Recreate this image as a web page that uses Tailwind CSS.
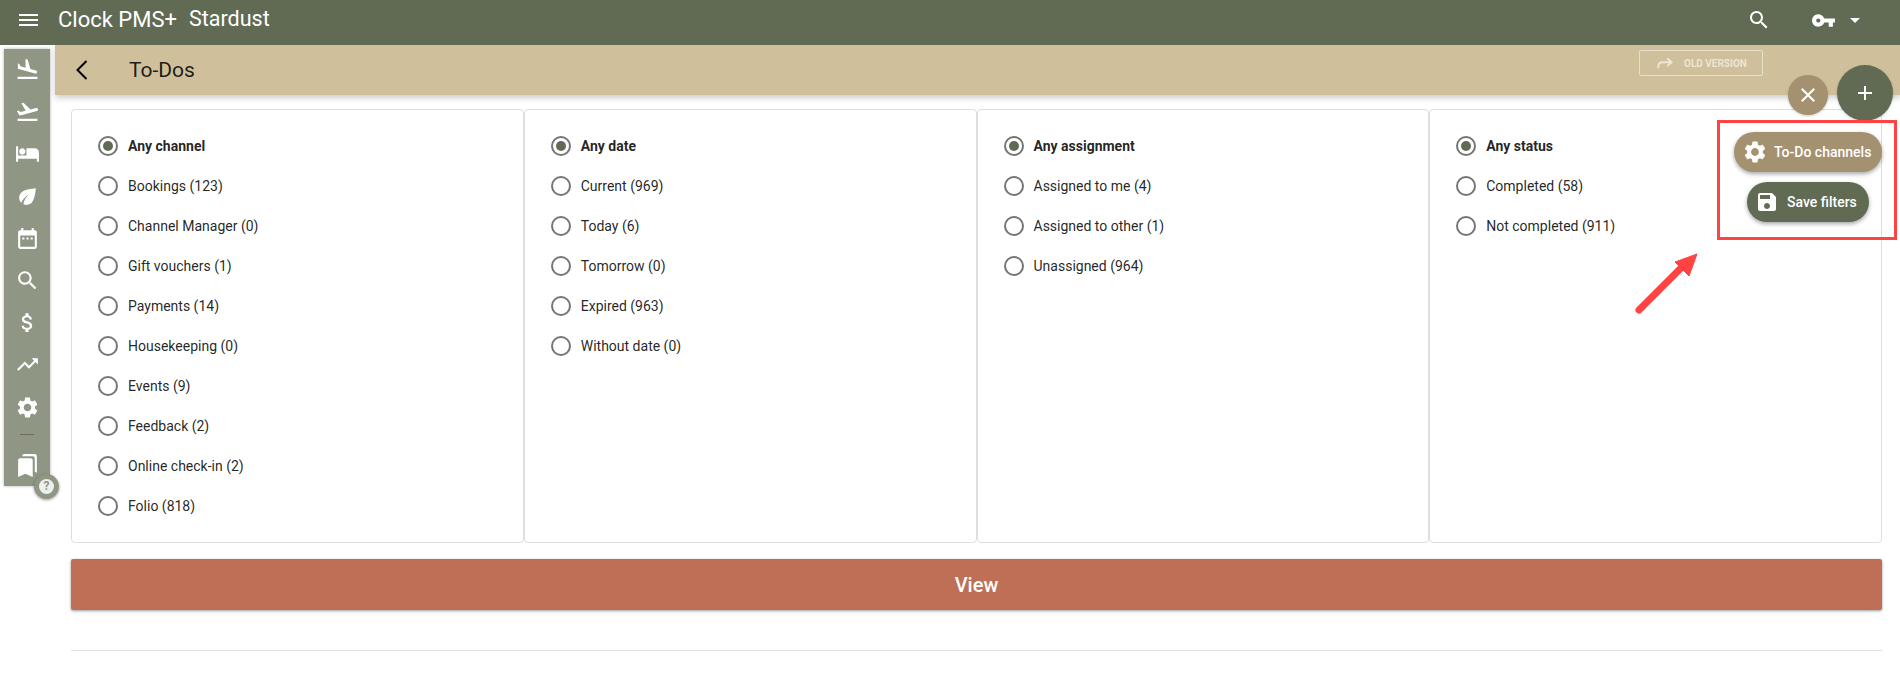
<!DOCTYPE html>
<html lang="en">
<head>
    <meta charset="UTF-8">
    <title>To-Dos | Clock PMS+</title>
    <script src="https://cdn.jsdelivr.net/npm/@tailwindcss/browser@4"></script>
</head>
<body class="relative w-[1900px] h-[689px] overflow-hidden bg-white font-['Roboto',sans-serif] text-[14px] text-black/87">

    <header class="relative z-20 h-[45px] pb-[5px] bg-[#616b54] flex items-center text-white">
        <button class="ml-[19px] w-[19px] flex flex-col gap-[3px]">
            <span class="block h-[2px] bg-white"></span>
            <span class="block h-[2px] bg-white"></span>
            <span class="block h-[2px] bg-white"></span>
        </button>
        <span class="ml-[20px] -mt-[1px] text-[22px]">Clock PMS+</span>
        <span class="ml-[12px] -mt-[1px] text-[21.5px]">Stardust</span>
        <svg class="ml-auto w-[24px] h-[24px]" viewBox="0 0 24 24" fill="white"><path d="M15.5 14h-.79l-.28-.27C15.41 12.59 16 11.11 16 9.5 16 5.91 13.09 3 9.5 3S3 5.91 3 9.5 5.91 16 9.5 16c1.61 0 3.09-.59 4.23-1.57l.27.28v.79l5 4.99L20.49 19l-4.99-5zm-6 0C7.01 14 5 11.99 5 9.5S7.01 5 9.5 5 14 7.01 14 9.5 11.99 14 9.5 14z"/></svg>
        <svg class="ml-[40px] w-[25px] h-[25px]" viewBox="0 0 24 24" fill="white"><path d="M12.65 10C11.83 7.67 9.61 6 7 6c-3.31 0-6 2.69-6 6s2.69 6 6 6c2.61 0 4.83-1.67 5.65-4H17v4h4v-4h2v-4H12.65zM7 14c-1.1 0-2-.9-2-2s.9-2 2-2 2 .9 2 2-.9 2-2 2z"/></svg>
        <span class="ml-[14px] mr-[40px] w-0 h-0 border-x-[5px] border-x-transparent border-t-[5px] border-t-white"></span>
    </header>

    <div class="flex">
        <aside class="relative z-10 ml-[4px] mt-[4px] w-[46px] h-[437px] bg-[#8f9784] flex flex-col items-center pt-[8px] text-white shadow-[0_0_3px_rgba(0,0,0,0.3)]">
            <svg class="w-[25px] h-[25px] mb-[17.2px]" viewBox="0 0 24 24" fill="white"><path d="M2.5 19h19v2h-19zm7.18-5.73l4.35 1.16 5.31 1.42c.8.21 1.62-.26 1.84-1.06.21-.8-.26-1.62-1.06-1.84l-5.31-1.42-2.76-9.02L10.12 2v8.28L5.15 8.95l-.93-2.32-1.45-.39v5.17l1.6.43 5.31 1.43z"/></svg>
            <svg class="w-[25px] h-[25px] mb-[17.2px]" viewBox="0 0 24 24" fill="white"><path d="M2.5 19h19v2h-19zm19.57-9.36c-.21-.8-1.04-1.28-1.84-1.06L14.92 10l-6.9-6.43-1.93.51 4.14 7.17-4.97 1.33-1.97-1.54-1.45.39 1.82 3.16.77 1.33 1.6-.43 5.31-1.42 4.35-1.16L21 11.49c.81-.23 1.28-1.05 1.07-1.85z"/></svg>
            <svg class="w-[25px] h-[25px] mb-[17.2px]" viewBox="0 0 24 24" fill="white"><path d="M7 13c1.66 0 3-1.34 3-3S8.66 7 7 7s-3 1.34-3 3 1.34 3 3 3zm12-6h-8v7H3V5H1v15h2v-3h18v3h2v-9c0-2.21-1.79-4-4-4z"/></svg>
            <svg class="w-[25px] h-[25px] mb-[17.2px]" viewBox="0 0 24 24" fill="white"><path d="M6.05 8.05c-2.73 2.73-2.73 7.15-.02 9.88 1.47-3.4 4.09-6.24 7.36-7.93-2.77 2.34-4.71 5.61-5.39 9.32 2.6 1.23 5.8.78 7.95-1.37C19.43 14.47 20 4 20 4S9.53 4.57 6.05 8.05z"/></svg>
            <svg class="w-[25px] h-[25px] mb-[17.2px]" viewBox="0 0 24 24" fill="white"><path d="M9 11H7v2h2v-2zm4 0h-2v2h2v-2zm4 0h-2v2h2v-2zm2-7h-1V2h-2v2H8V2H6v2H5c-1.11 0-1.99.9-1.99 2L3 20c0 1.1.89 2 2 2h14c1.1 0 2-.9 2-2V6c0-1.1-.9-2-2-2zm0 16H5V9h14v11z"/></svg>
            <svg class="w-[25px] h-[25px] mb-[17.2px]" viewBox="0 0 24 24" fill="white"><path d="M15.5 14h-.79l-.28-.27C15.41 12.59 16 11.11 16 9.5 16 5.91 13.09 3 9.5 3S3 5.91 3 9.5 5.91 16 9.5 16c1.61 0 3.09-.59 4.23-1.57l.27.28v.79l5 4.99L20.49 19l-4.99-5zm-6 0C7.01 14 5 11.99 5 9.5S7.01 5 9.5 5 14 7.01 14 9.5 11.99 14 9.5 14z"/></svg>
            <svg class="w-[25px] h-[25px] mb-[17.2px]" viewBox="0 0 24 24" fill="white"><path d="M11.8 10.9c-2.27-.59-3-1.2-3-2.15 0-1.09 1.01-1.85 2.7-1.85 1.78 0 2.44.85 2.5 2.1h2.21c-.07-1.72-1.12-3.3-3.21-3.81V3h-3v2.16c-1.94.42-3.5 1.68-3.5 3.61 0 2.31 1.91 3.46 4.7 4.13 2.5.6 3 1.48 3 2.41 0 .69-.49 1.79-2.7 1.79-2.06 0-2.87-.92-2.98-2.1h-2.2c.12 2.19 1.76 3.42 3.68 3.83V21h3v-2.15c1.95-.37 3.5-1.5 3.5-3.55 0-2.84-2.43-3.81-4.7-4.4z"/></svg>
            <svg class="w-[25px] h-[25px] mb-[17.2px]" viewBox="0 0 24 24" fill="white"><path d="M16 6l2.29 2.29-4.88 4.88-4-4L2 16.59 3.41 18l6-6 4 4 6.3-6.29L22 12V6z"/></svg>
            <svg class="w-[25px] h-[25px]" viewBox="0 0 24 24" fill="white"><path d="M19.14 12.94c.04-.3.06-.61.06-.94 0-.32-.02-.64-.07-.94l2.03-1.58c.18-.14.23-.41.12-.61l-1.92-3.32c-.12-.22-.37-.29-.59-.22l-2.39.96c-.5-.38-1.03-.7-1.62-.94l-.36-2.54c-.04-.24-.24-.41-.48-.41h-3.84c-.24 0-.43.17-.47.41l-.36 2.54c-.59.24-1.13.57-1.62.94l-2.39-.96c-.22-.08-.47 0-.59.22L2.74 8.87c-.12.21-.08.47.12.61l2.03 1.58c-.05.3-.09.63-.09.94s.02.64.07.94l-2.03 1.58c-.18.14-.23.41-.12.61l1.92 3.32c.12.22.37.29.59.22l2.39-.96c.5.38 1.03.7 1.62.94l.36 2.54c.05.24.24.41.48.41h3.84c.24 0 .44-.17.47-.41l.36-2.54c.59-.24 1.13-.56 1.62-.94l2.39.96c.22.08.47 0 .59-.22l1.92-3.32c.12-.22.07-.47-.12-.61l-2.01-1.58zM12 15.6c-1.98 0-3.6-1.62-3.6-3.6s1.62-3.6 3.6-3.6 3.6 1.62 3.6 3.6-1.62 3.6-3.6 3.6z"/></svg>
            <div class="w-[14px] h-px bg-[#6e6a5c] mt-[14px] mb-[18px]"></div>
            <svg class="w-[25px] h-[25px]" viewBox="0 0 24 24" fill="white"><path d="M19 18l2 1V3c0-1.1-.9-2-2-2H8.99C7.89 1 7 1.9 7 3h10c1.1 0 2 .9 2 2v13zM15 5H5c-1.1 0-2 .9-2 2v16l7-3 7 3V7c0-1.1-.9-2-2-2z"/></svg>
            <div class="absolute left-[30px] top-[425px] w-[25px] h-[25px] rounded-full bg-[#8f9784] shadow-[0_1px_3px_rgba(0,0,0,0.4)] flex items-center justify-center">
                <span class="w-[15px] h-[15px] rounded-full bg-white/85 text-[#8f9784] text-[12px] font-bold leading-[15px] text-center">?</span>
            </div>
        </aside>

        <main class="w-[1845px] ml-[5px]">
            <div class="h-[50px] bg-[#cfc09b] flex items-center shadow-[0_3px_6px_rgba(0,0,0,0.2)]">
                <svg class="ml-[16px] w-[24px] h-[24px]" viewBox="0 0 24 24" fill="none" stroke="black" stroke-width="2"><path d="M15.5 3 L6.5 12 L15.5 21"/></svg>
                <h1 class="ml-[34px] mt-[1px] text-[21px]">To-Dos</h1>
                <a class="ml-auto mr-[137px] self-start mt-[5px] w-[124px] h-[26px] border border-white/50 rounded-[2px] flex items-center text-[10px] font-bold text-white/60">
                    <svg class="ml-[16px] w-[18px] h-[18px]" viewBox="0 0 24 24" fill="none" stroke="white" stroke-opacity="0.6" stroke-width="2.5"><path d="M3 19v-2c0-4 2-6 6-6h11M15 6l6 5-6 5"/></svg>
                    <span class="ml-[10px]">OLD VERSION</span>
                </a>
            </div>

            <section class="mt-[14px] ml-[16px] w-[1811px] h-[434px] grid grid-cols-4">
                <div class="pl-[26px] pt-[16px] border border-[#dedede] rounded-[4px]">
                    <label class="flex items-center h-[40px] gap-[10px] font-bold"><span class="w-[20px] h-[20px] rounded-full border-2 border-[#757575] flex items-center justify-center"><span class="w-[10px] h-[10px] rounded-full bg-[#616b54]"></span></span><span>Any channel</span></label>
                    <label class="flex items-center h-[40px] gap-[10px]"><span class="w-[20px] h-[20px] rounded-full border-2 border-[#757575]"></span><span>Bookings (123)</span></label>
                    <label class="flex items-center h-[40px] gap-[10px]"><span class="w-[20px] h-[20px] rounded-full border-2 border-[#757575]"></span><span>Channel Manager (0)</span></label>
                    <label class="flex items-center h-[40px] gap-[10px]"><span class="w-[20px] h-[20px] rounded-full border-2 border-[#757575]"></span><span>Gift vouchers (1)</span></label>
                    <label class="flex items-center h-[40px] gap-[10px]"><span class="w-[20px] h-[20px] rounded-full border-2 border-[#757575]"></span><span>Payments (14)</span></label>
                    <label class="flex items-center h-[40px] gap-[10px]"><span class="w-[20px] h-[20px] rounded-full border-2 border-[#757575]"></span><span>Housekeeping (0)</span></label>
                    <label class="flex items-center h-[40px] gap-[10px]"><span class="w-[20px] h-[20px] rounded-full border-2 border-[#757575]"></span><span>Events (9)</span></label>
                    <label class="flex items-center h-[40px] gap-[10px]"><span class="w-[20px] h-[20px] rounded-full border-2 border-[#757575]"></span><span>Feedback (2)</span></label>
                    <label class="flex items-center h-[40px] gap-[10px]"><span class="w-[20px] h-[20px] rounded-full border-2 border-[#757575]"></span><span>Online check-in (2)</span></label>
                    <label class="flex items-center h-[40px] gap-[10px]"><span class="w-[20px] h-[20px] rounded-full border-2 border-[#757575]"></span><span>Folio (818)</span></label>
                </div>
                <div class="pl-[26px] pt-[16px] border border-[#dedede] rounded-[4px]">
                    <label class="flex items-center h-[40px] gap-[10px] font-bold"><span class="w-[20px] h-[20px] rounded-full border-2 border-[#757575] flex items-center justify-center"><span class="w-[10px] h-[10px] rounded-full bg-[#616b54]"></span></span><span>Any date</span></label>
                    <label class="flex items-center h-[40px] gap-[10px]"><span class="w-[20px] h-[20px] rounded-full border-2 border-[#757575]"></span><span>Current (969)</span></label>
                    <label class="flex items-center h-[40px] gap-[10px]"><span class="w-[20px] h-[20px] rounded-full border-2 border-[#757575]"></span><span>Today (6)</span></label>
                    <label class="flex items-center h-[40px] gap-[10px]"><span class="w-[20px] h-[20px] rounded-full border-2 border-[#757575]"></span><span>Tomorrow (0)</span></label>
                    <label class="flex items-center h-[40px] gap-[10px]"><span class="w-[20px] h-[20px] rounded-full border-2 border-[#757575]"></span><span>Expired (963)</span></label>
                    <label class="flex items-center h-[40px] gap-[10px]"><span class="w-[20px] h-[20px] rounded-full border-2 border-[#757575]"></span><span>Without date (0)</span></label>
                </div>
                <div class="pl-[26px] pt-[16px] border border-[#dedede] rounded-[4px]">
                    <label class="flex items-center h-[40px] gap-[10px] font-bold"><span class="w-[20px] h-[20px] rounded-full border-2 border-[#757575] flex items-center justify-center"><span class="w-[10px] h-[10px] rounded-full bg-[#616b54]"></span></span><span>Any assignment</span></label>
                    <label class="flex items-center h-[40px] gap-[10px]"><span class="w-[20px] h-[20px] rounded-full border-2 border-[#757575]"></span><span>Assigned to me (4)</span></label>
                    <label class="flex items-center h-[40px] gap-[10px]"><span class="w-[20px] h-[20px] rounded-full border-2 border-[#757575]"></span><span>Assigned to other (1)</span></label>
                    <label class="flex items-center h-[40px] gap-[10px]"><span class="w-[20px] h-[20px] rounded-full border-2 border-[#757575]"></span><span>Unassigned (964)</span></label>
                </div>
                <div class="pl-[26px] pt-[16px] border border-[#dedede] rounded-[4px]">
                    <label class="flex items-center h-[40px] gap-[10px] font-bold"><span class="w-[20px] h-[20px] rounded-full border-2 border-[#757575] flex items-center justify-center"><span class="w-[10px] h-[10px] rounded-full bg-[#616b54]"></span></span><span>Any status</span></label>
                    <label class="flex items-center h-[40px] gap-[10px]"><span class="w-[20px] h-[20px] rounded-full border-2 border-[#757575]"></span><span>Completed (58)</span></label>
                    <label class="flex items-center h-[40px] gap-[10px]"><span class="w-[20px] h-[20px] rounded-full border-2 border-[#757575]"></span><span>Not completed (911)</span></label>
                </div>
            </section>

            <button class="block mt-[16px] ml-[16px] w-[1811px] h-[51px] bg-[#bf6f56] rounded-[2px] text-white text-[20px] font-medium shadow-[0_1px_3px_rgba(0,0,0,0.4)]">View</button>
            <hr class="mt-[40px] ml-[16px] w-[1811px] border-[#e0e0e0]">
        </main>
    </div>

    <!-- speed dial floats over the filter cards -->
    <button class="absolute z-30 left-[1788px] top-[75px] w-[40px] h-[40px] rounded-full bg-[#a4916f] flex items-center justify-center shadow-[0_1px_3px_rgba(0,0,0,0.2)]">
        <svg class="w-[24px] h-[24px]" viewBox="0 0 24 24" fill="white"><path d="M19 6.41L17.59 5 12 10.59 6.41 5 5 6.41 10.59 12 5 17.59 6.41 19 12 13.41 17.59 19 19 17.59 13.41 12z"/></svg>
    </button>
    <button class="absolute z-30 left-[1837px] top-[65px] w-[56px] h-[56px] rounded-full bg-[#616b54] flex items-center justify-center shadow-[0_1px_3px_rgba(0,0,0,0.2)]">
        <svg class="w-[24px] h-[24px]" viewBox="0 0 24 24" fill="white"><path d="M19 13h-6v6h-2v-6H5v-2h6V5h2v6h6v2z"/></svg>
    </button>
    <button class="absolute z-30 left-[1734px] top-[132px] w-[148px] h-[40px] rounded-full bg-[#a4916f] text-white font-medium text-[14px] flex items-center shadow-[0_2px_4px_rgba(0,0,0,0.35)]">
        <svg class="ml-[8px] w-[26px] h-[26px]" viewBox="0 0 24 24" fill="white"><path d="M19.14 12.94c.04-.3.06-.61.06-.94 0-.32-.02-.64-.07-.94l2.03-1.58c.18-.14.23-.41.12-.61l-1.92-3.32c-.12-.22-.37-.29-.59-.22l-2.39.96c-.5-.38-1.03-.7-1.62-.94l-.36-2.54c-.04-.24-.24-.41-.48-.41h-3.84c-.24 0-.43.17-.47.41l-.36 2.54c-.59.24-1.13.57-1.62.94l-2.39-.96c-.22-.08-.47 0-.59.22L2.74 8.87c-.12.21-.08.47.12.61l2.03 1.58c-.05.3-.09.63-.09.94s.02.64.07.94l-2.03 1.58c-.18.14-.23.41-.12.61l1.92 3.32c.12.22.37.29.59.22l2.39-.96c.5.38 1.03.7 1.62.94l.36 2.54c.05.24.24.41.48.41h3.84c.24 0 .44-.17.47-.41l.36-2.54c.59-.24 1.13-.56 1.62-.94l2.39.96c.22.08.47 0 .59-.22l1.92-3.32c.12-.22.07-.47-.12-.61l-2.01-1.58zM12 15.6c-1.98 0-3.6-1.62-3.6-3.6s1.62-3.6 3.6-3.6 3.6 1.62 3.6 3.6-1.62 3.6-3.6 3.6z"/></svg>
        <span class="ml-[6px]">To-Do channels</span>
    </button>
    <button class="absolute z-30 left-[1747px] top-[182px] w-[122px] h-[40px] rounded-full bg-[#616b54] text-white font-medium text-[14px] flex items-center shadow-[0_2px_4px_rgba(0,0,0,0.35)]">
        <svg class="ml-[8px] w-[24px] h-[24px]" viewBox="0 0 24 24" fill="white"><path d="M17 3H5c-1.11 0-2 .9-2 2v14c0 1.1.89 2 2 2h14c1.1 0 2-.9 2-2V7l-4-4zm-5 16c-1.66 0-3-1.34-3-3s1.34-3 3-3 3 1.34 3 3-1.34 3-3 3zm3-10H5V5h10v4z"/></svg>
        <span class="ml-[8px]">Save filters</span>
    </button>

    <!-- red annotation drawn on the screenshot -->
    <div class="absolute z-40 left-[1717px] top-[120px] w-[180px] h-[120px] border-[3px] border-[#ff4343]"></div>
    <svg class="absolute z-40 left-[1630px] top-[250px] w-[80px] h-[70px]" viewBox="0 0 80 70">
        <path d="M9 60 L53 16" stroke="#ff4343" stroke-width="7" stroke-linecap="round"/>
        <path d="M67 4 L45 12 L59 26 Z" fill="#ff4343" stroke="#ff4343" stroke-width="1"/>
    </svg>
</body>
</html>
